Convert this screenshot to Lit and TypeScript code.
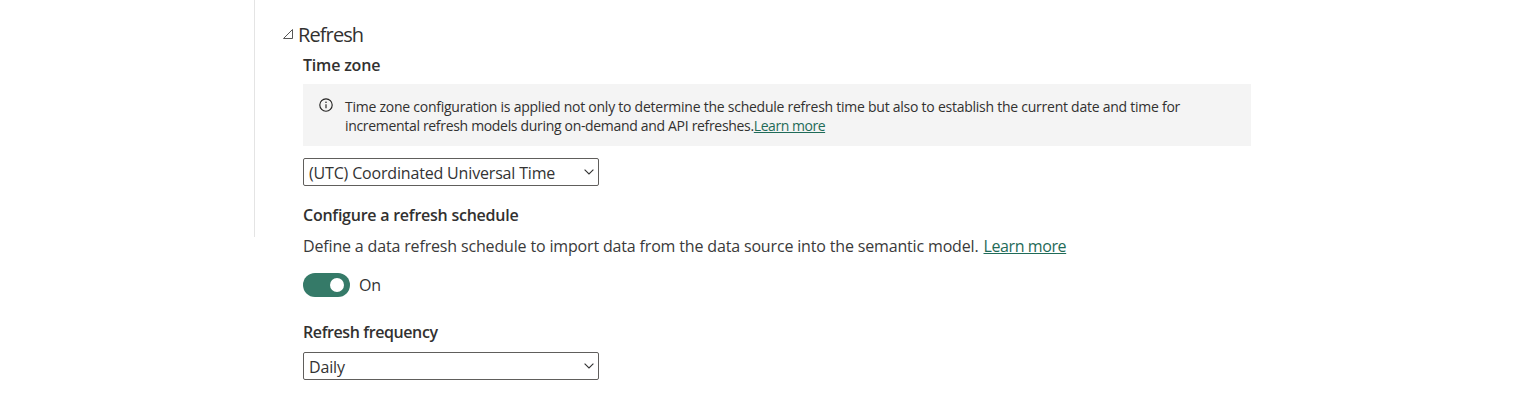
import { LitElement, html, css, svg } from "lit";
import { customElement } from "lit/decorators.js";

const chevron = svg`<svg class="chev" width="10" height="6" viewBox="0 0 10 6" fill="none"><path d="M0.6 0.6 L5 5 L9.4 0.6" stroke="#333" stroke-width="1.1"/></svg>`;

@customElement("app-root")
export class AppRoot extends LitElement {
  static styles = css`
    :host { display: block; width: 1536px; height: 408px; background: #fff; overflow: hidden;
      font-family: "Open Sans", "Noto Sans", sans-serif; color: #323130; }
    .page { display: flex; align-items: flex-start; }
    .rail { width: 1px; height: 237px; background: #e4e4e4; margin-left: 254px; flex: none; }
    .main { padding: 21px 0 0 27px; width: 969px; flex: none; }
    .title { display: flex; align-items: center; gap: 4px; height: 26px; font-size: 20px; letter-spacing: -0.9px; color: #323130; }
    .tri { flex: none; margin-top: -1px; }
    .body { padding-left: 21px; }
    .h { font-size: 16px; font-weight: 600; line-height: 22px; }
    .h1 { margin-top: 7px; letter-spacing: -0.2px; }
    .h2 { margin-top: 18px; letter-spacing: -0.24px; }
    .h3 { margin-top: 24px; letter-spacing: -0.4px; }
    .banner { margin-top: 8px; height: 62px; box-sizing: border-box; background: #f4f4f4; display: flex; gap: 12px; padding: 13px 16px; font-size: 14px; line-height: 19px; letter-spacing: -0.25px; }
    .banner svg { flex: none; margin-top: 1px; }
    .line2 { letter-spacing: -0.32px; }
    .line2 a { letter-spacing: -0.45px; }
    a { color: #1f6b58; text-decoration: underline; }
    .sel { width: 296px; height: 28px; box-sizing: border-box; border: 1px solid #605e5c; border-radius: 2px; display: flex; align-items: center; justify-content: space-between; padding: 0 5px 0 5px; font-size: 16px; letter-spacing: -0.17px; color: #333; }
    .sel span { margin-top: 2px; }
    .sel1 { margin-top: 12px; }
    .sel2 { margin-top: 9px; }
    .chev { flex: none; margin: -1px -1px 0 0; }
    .desc { margin-top: 9px; font-size: 16px; line-height: 22px; letter-spacing: -0.16px; color: #3a3a3a; }
    .desc a { letter-spacing: -0.4px; margin-left: 1px; }
    .tog { display: flex; align-items: center; gap: 9px; margin-top: 16px; font-size: 16px; letter-spacing: -0.25px; color: #333; }
    .track { width: 47px; height: 24px; border-radius: 12px; background: #357a68; display: flex; align-items: center; justify-content: flex-end; padding-right: 6px; box-sizing: border-box; }
    .knob { width: 14px; height: 14px; border-radius: 50%; background: #fff; }
  `;

  render() {
    return html`<div class="page">
      <div class="rail"></div>
      <div class="main">
        <div class="title">
          <svg class="tri" width="12" height="12" viewBox="0 0 12 12" fill="none"><path d="M10.5 1.5 V10.5 H1.5 Z" stroke="#444" stroke-width="0.9"/></svg>
          <span>Refresh</span>
        </div>
        <div class="body">
          <div class="h h1">Time zone</div>
          <div class="banner">
            <svg width="14" height="14" viewBox="0 0 14 14" fill="none">
              <circle cx="7" cy="7" r="6.2" stroke="#252423" stroke-width="1.15"/>
              <path d="M7 6.2 V10.2" stroke="#252423" stroke-width="1.15"/>
              <circle cx="7" cy="4.2" r="0.8" fill="#252423"/>
            </svg>
            <div>Time zone configuration is applied not only to determine the schedule refresh time but also to establish the current date and time for<br /><span class="line2">incremental refresh models during on-demand and API refreshes.<a>Learn more</a></span></div>
          </div>
          <div class="sel sel1"><span>(UTC) Coordinated Universal Time</span>${chevron}</div>
          <div class="h h2">Configure a refresh schedule</div>
          <div class="desc">Define a data refresh schedule to import data from the data source into the semantic model. <a>Learn more</a></div>
          <div class="tog"><div class="track"><div class="knob"></div></div><span>On</span></div>
          <div class="h h3">Refresh frequency</div>
          <div class="sel sel2"><span>Daily</span>${chevron}</div>
        </div>
      </div>
    </div>`;
  }
}
